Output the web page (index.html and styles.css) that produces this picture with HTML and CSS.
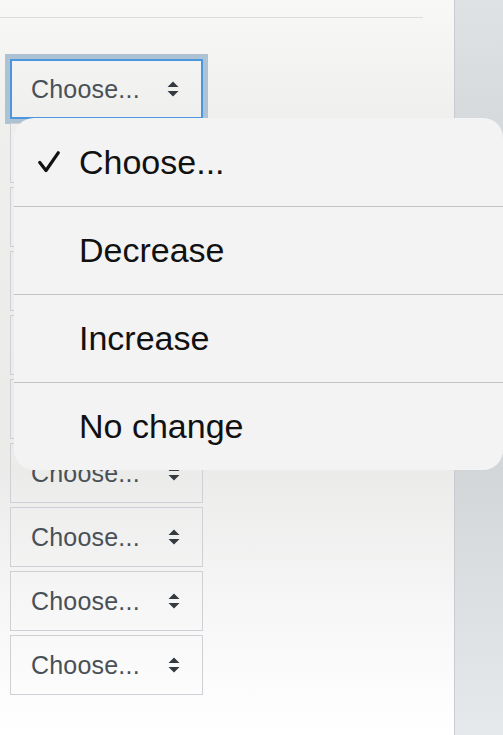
FILE: index.html
```html
<!DOCTYPE html>
<html>
<head>
<meta charset="utf-8">
<link rel="stylesheet" href="styles.css">
</head>
<body>
<div class="layout">
  <div class="main">
    <div class="rule"></div>
    <div class="list">
      <div class="select focused"><span>Choose...</span><svg class="caret" viewBox="0 0 12 16" width="12" height="16"><path d="M6 0.5L11.5 6H0.5Z M6 15.5L11.5 10H0.5Z" fill="#343a40"/></svg></div>
      <div class="select"><span>Choose...</span><svg class="caret" viewBox="0 0 12 16" width="12" height="16"><path d="M6 0.5L11.5 6H0.5Z M6 15.5L11.5 10H0.5Z" fill="#343a40"/></svg></div>
      <div class="select"><span>Choose...</span><svg class="caret" viewBox="0 0 12 16" width="12" height="16"><path d="M6 0.5L11.5 6H0.5Z M6 15.5L11.5 10H0.5Z" fill="#343a40"/></svg></div>
      <div class="select"><span>Choose...</span><svg class="caret" viewBox="0 0 12 16" width="12" height="16"><path d="M6 0.5L11.5 6H0.5Z M6 15.5L11.5 10H0.5Z" fill="#343a40"/></svg></div>
      <div class="select"><span>Choose...</span><svg class="caret" viewBox="0 0 12 16" width="12" height="16"><path d="M6 0.5L11.5 6H0.5Z M6 15.5L11.5 10H0.5Z" fill="#343a40"/></svg></div>
      <div class="select"><span>Choose...</span><svg class="caret" viewBox="0 0 12 16" width="12" height="16"><path d="M6 0.5L11.5 6H0.5Z M6 15.5L11.5 10H0.5Z" fill="#343a40"/></svg></div>
      <div class="select"><span>Choose...</span><svg class="caret" viewBox="0 0 12 16" width="12" height="16"><path d="M6 0.5L11.5 6H0.5Z M6 15.5L11.5 10H0.5Z" fill="#343a40"/></svg></div>
      <div class="select"><span>Choose...</span><svg class="caret" viewBox="0 0 12 16" width="12" height="16"><path d="M6 0.5L11.5 6H0.5Z M6 15.5L11.5 10H0.5Z" fill="#343a40"/></svg></div>
      <div class="select"><span>Choose...</span><svg class="caret" viewBox="0 0 12 16" width="12" height="16"><path d="M6 0.5L11.5 6H0.5Z M6 15.5L11.5 10H0.5Z" fill="#343a40"/></svg></div>
      <div class="select"><span>Choose...</span><svg class="caret" viewBox="0 0 12 16" width="12" height="16"><path d="M6 0.5L11.5 6H0.5Z M6 15.5L11.5 10H0.5Z" fill="#343a40"/></svg></div>
    </div>
  </div>
  <div class="sidebar"></div>
</div>
<div class="menu">
  <div class="option selected"><svg class="check" viewBox="0 0 22 22" width="22" height="22"><path d="M1.8 11.5L8 19.5L20.2 1.8" fill="none" stroke="#111" stroke-width="3.2" stroke-linecap="round" stroke-linejoin="round"/></svg><span>Choose...</span></div>
  <div class="option"><span>Decrease</span></div>
  <div class="option"><span>Increase</span></div>
  <div class="option"><span>No change</span></div>
</div>
</body>
</html>
```

FILE: styles.css
```css
html, body {
  margin: 0;
  padding: 0;
}
body {
  width: 503px;
  height: 735px;
  overflow: hidden;
  position: relative;
  font-family: "Liberation Sans", Arial, sans-serif;
}
.layout {
  display: flex;
  height: 735px;
}
.main {
  width: 454px;
  flex: none;
  background: linear-gradient(to bottom, #f8f8f7 0px, #efefee 120px, #ececeb 300px, #ebebea 470px, #f6f6f6 600px, #ffffff 735px);
}
.sidebar {
  flex: 1;
  border-left: 1px solid #c8ccd0;
  background: linear-gradient(to bottom, #dfe2e4 0px, #d7dadd 120px, #d3d6d9 470px, #dde0e3 600px, #e6e9eb 735px);
}
.rule {
  margin-top: 17px;
  width: 423px;
  height: 1px;
  background: #dcdcdb;
}
.list {
  margin-top: 41px;
  padding-left: 10px;
  display: flex;
  flex-direction: column;
  gap: 4px;
}
.select {
  width: 193px;
  height: 60px;
  box-sizing: border-box;
  border: 1px solid #cdd1d5;
  display: flex;
  align-items: center;
  justify-content: space-between;
  padding: 0 22px 0 20px;
  font-size: 25px;
  letter-spacing: 0.2px;
  color: #495057;
}
.select.focused {
  border: 2px solid #4a97e0;
  padding-left: 19px;
  box-shadow: 0 0 0 5px #adc2d3;
}
.caret {
  display: block;
}
.menu {
  position: absolute;
  left: 14px;
  top: 118px;
  width: 489px;
  border-radius: 20px;
  background: #f3f3f3;
  overflow: hidden;
}
.option {
  height: 88px;
  box-sizing: border-box;
  display: flex;
  align-items: center;
  padding-left: 65px;
  position: relative;
  font-size: 34px;
  color: #111111;
}
.option + .option {
  border-top: 1px solid #c3c3c3;
}
.check {
  position: absolute;
  left: 24px;
  top: 33px;
}
```
